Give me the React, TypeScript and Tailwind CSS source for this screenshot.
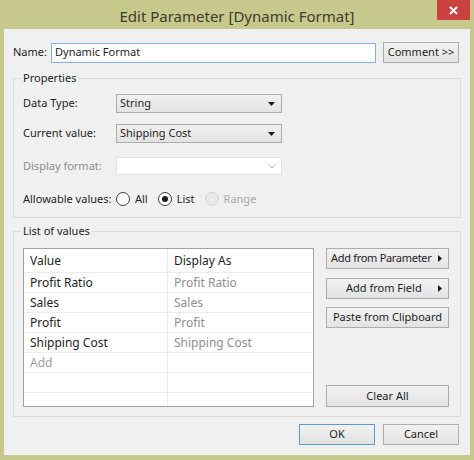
import React from 'react'

/* ── Small pieces ───────────────────────────────────────────── */
function Caret() {
  return (
    <svg width="7" height="4" viewBox="0 0 7 4" className="shrink-0">
      <path d="M0 0 L7 0 L3.5 4 Z" fill="#1a1a1a" />
    </svg>
  )
}

function SideCaret() {
  return (
    <svg width="4" height="7" viewBox="0 0 4 7" className="shrink-0">
      <path d="M0 0 L4 3.5 L0 7 Z" fill="#1a1a1a" />
    </svg>
  )
}

function Radio({ checked, disabled }: { checked?: boolean; disabled?: boolean }) {
  return (
    <span
      className={`w-[14px] h-[14px] rounded-full border flex items-center justify-center shrink-0 ${
        disabled ? 'border-[#d2d2d2] bg-[#e9e9e9]' : 'border-[#3c3c3c] bg-white'
      }`}
    >
      {checked && <span className="w-[6px] h-[6px] rounded-full bg-[#1a1a1a]" />}
    </span>
  )
}

function Btn({
  children,
  className = '',
  primary,
}: {
  children: React.ReactNode
  className?: string
  primary?: boolean
}) {
  return (
    <button
      className={`h-[21px] border bg-gradient-to-b from-[#f2f2f2] to-[#e3e3e3] text-[#1e1e1e] flex items-center whitespace-nowrap ${
        primary ? 'border-[#5a9bd5]' : 'border-[#adadad]'
      } ${className}`}
    >
      {children}
    </button>
  )
}

const rows = [
  { v: 'Profit Ratio', d: 'Profit Ratio' },
  { v: 'Sales', d: 'Sales' },
  { v: 'Profit', d: 'Profit' },
  { v: 'Shipping Cost', d: 'Shipping Cost' },
]

/* ── Dialog ─────────────────────────────────────────────────── */
export default function App() {
  return (
    <div
      className="w-[474px] h-[460px] bg-[#c7c88c] flex flex-col text-[11px] text-[#1e1e1e] whitespace-nowrap"
      style={{ fontFamily: '"Noto Sans", "Open Sans", sans-serif' }}
    >
      {/* Title bar */}
      <div className="relative h-[29px] shrink-0 flex items-center justify-center">
        <span className="text-[15px] text-[#3d3d2c] pt-[3px]">Edit Parameter [Dynamic Format]</span>
        <div className="absolute right-[4px] top-0 w-[33px] h-[20px] bg-[#c9423f] flex items-center justify-center">
          <svg width="9" height="9" viewBox="0 0 9 9">
            <path d="M1 1 L8 8 M8 1 L1 8" stroke="#fff" strokeWidth="2" />
          </svg>
        </div>
      </div>

      {/* Body */}
      <div className="mx-[4px] mb-[5px] flex-1 bg-[#f0f0f0] flex flex-col px-[9px] pt-[13px]">
        {/* Name row */}
        <div className="flex items-center h-[21px]">
          <span className="w-[38px]">Name:</span>
          <div className="w-[325px] h-[20px] bg-white border border-[#7eb4ea] flex items-center pl-[3px]">
            Dynamic Format
          </div>
          <Btn className="ml-[7px] w-[76px] justify-center">Comment &gt;&gt;</Btn>
        </div>

        {/* Properties */}
        <div className="relative mt-[15px] h-[140px] w-[448px] border border-[#dcdcdc] pl-[9px] flex flex-col">
          <span className="absolute -top-[9px] left-[7px] px-[2px] bg-[#f0f0f0]">Properties</span>

          <div className="flex items-center mt-[15px] h-[19px]">
            <span className="w-[93px]">Data Type:</span>
            <div className="w-[166px] h-[19px] border border-[#acacac] bg-gradient-to-b from-[#f0f0f0] to-[#e3e3e3] flex items-center justify-between pl-[3px] pr-[6px]">
              <span>String</span>
              <Caret />
            </div>
          </div>

          <div className="flex items-center mt-[11px] h-[19px]">
            <span className="w-[93px]">Current value:</span>
            <div className="w-[166px] h-[19px] border border-[#acacac] bg-gradient-to-b from-[#f0f0f0] to-[#e3e3e3] flex items-center justify-between pl-[3px] pr-[6px]">
              <span>Shipping Cost</span>
              <Caret />
            </div>
          </div>

          <div className="flex items-center mt-[14px] h-[18px]">
            <span className="w-[93px] text-[#8d8d8d]">Display format:</span>
            <div className="w-[166px] h-[18px] border border-[#e3e3e3] bg-white flex items-center justify-end pr-[5px]">
              <svg width="8" height="5" viewBox="0 0 8 5">
                <path d="M0.5 0.5 L4 4 L7.5 0.5" stroke="#b8b8b8" fill="none" />
              </svg>
            </div>
          </div>

          <div className="flex items-center mt-[15px] h-[18px]">
            <span className="w-[93px]">Allowable values:</span>
            <div className="flex items-center gap-[5px]">
              <Radio />
              <span className="mr-[5px]">All</span>
              <Radio checked />
              <span className="mr-[5px]">List</span>
              <Radio disabled />
              <span className="text-[#a8a8a8]">Range</span>
            </div>
          </div>
        </div>

        {/* List of values */}
        <div className="relative mt-[13px] h-[186px] w-[448px] border border-[#dcdcdc] pl-[9px] pt-[16px] flex">
          <span className="absolute -top-[9px] left-[7px] px-[2px] bg-[#f0f0f0]">List of values</span>

          <div className="w-[291px] h-[159px] border border-[#a3a3a3] bg-white flex flex-col text-[12px] overflow-hidden">
            <div className="grid grid-cols-[144px_1fr] h-[24px] border-b border-[#ececec]">
              <span className="pl-[6px] flex items-center border-r border-[#ececec]">Value</span>
              <span className="pl-[6px] flex items-center">Display As</span>
            </div>
            {rows.map((r) => (
              <div key={r.v} className="grid grid-cols-[144px_1fr] h-[20px] border-b border-[#ececec]">
                <span className="pl-[6px] flex items-center border-r border-[#ececec]">{r.v}</span>
                <span className="pl-[6px] flex items-center text-[#8e8e8e]">{r.d}</span>
              </div>
            ))}
            <div className="grid grid-cols-[144px_1fr] h-[20px] border-b border-[#ececec]">
              <span className="pl-[6px] flex items-center border-r border-[#ececec] text-[#a0a0a0]">Add</span>
              <span />
            </div>
            <div className="grid grid-cols-[144px_1fr] h-[20px] border-b border-[#ececec]">
              <span className="border-r border-[#ececec]" />
              <span />
            </div>
            <div className="grid grid-cols-[144px_1fr] flex-1">
              <span className="border-r border-[#ececec]" />
              <span />
            </div>
          </div>

          <div className="ml-[12px] w-[123px] h-[159px] flex flex-col">
            <Btn className="w-[123px] justify-between pl-[4px] pr-[6px]">
              <span className="tracking-[-0.3px]">Add from Parameter</span>
              <SideCaret />
            </Btn>
            <Btn className="mt-[9px] w-[123px] justify-between pl-[19px] pr-[6px]">
              <span>Add from Field</span>
              <SideCaret />
            </Btn>
            <Btn className="mt-[8px] w-[123px] justify-center">Paste from Clipboard</Btn>
            <Btn className="mt-auto w-[123px] h-[22px] justify-center">Clear All</Btn>
          </div>
        </div>

        {/* Footer */}
        <div className="flex justify-end gap-[8px] mt-[7px] pr-[2px]">
          <Btn primary className="w-[76px] justify-center">OK</Btn>
          <Btn className="w-[76px] justify-center">Cancel</Btn>
        </div>
      </div>
    </div>
  )
}
